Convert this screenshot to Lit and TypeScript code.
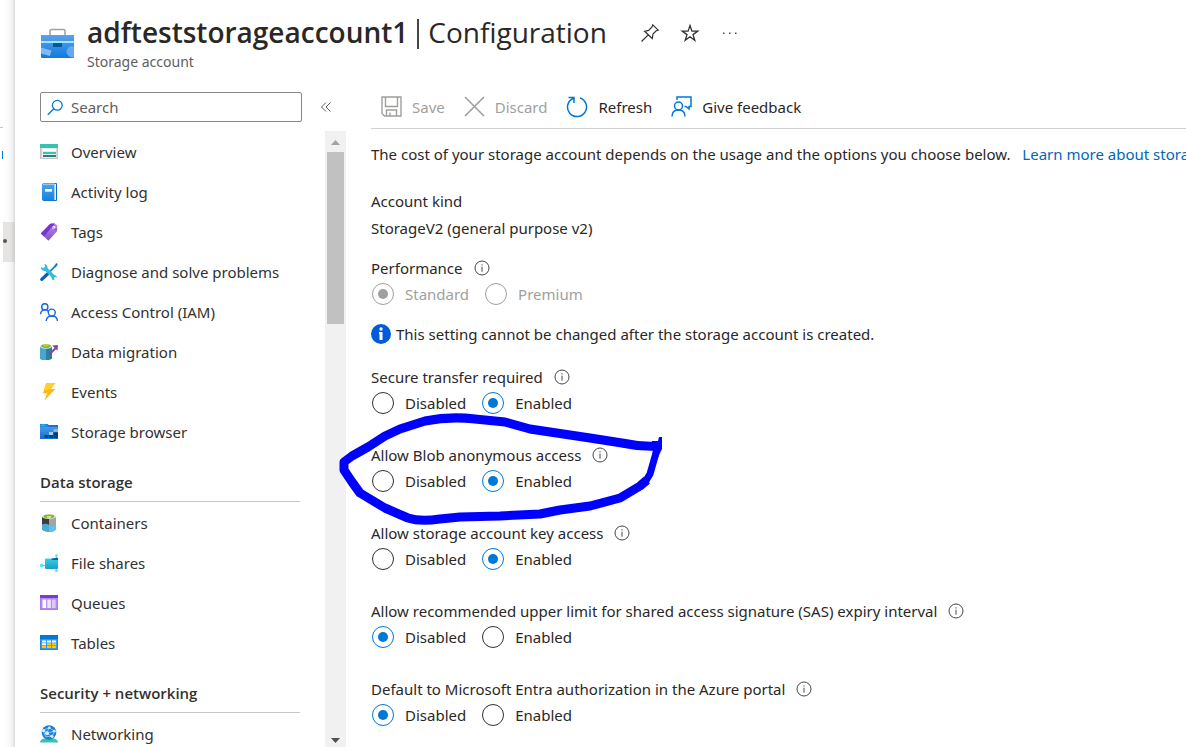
import { LitElement, html, css, svg, nothing } from "lit";
import { customElement, state } from "lit/decorators.js";

type Icon = ReturnType<typeof svg>;

const icons: Record<string, Icon> = {
  overview: svg`<rect x="0" y="1" width="18" height="15" rx=".6" fill="#c4c4c4"/><rect x="1.5" y="5" width="15" height="10" fill="#ececec"/><rect x="0" y="1" width="18" height="4" fill="#37c2b1"/><rect x="3" y="6" width="13" height="2" fill="#fff"/><rect x="3" y="9" width="13" height="2" fill="#37c2b1"/><rect x="3" y="12" width="13" height="2" fill="#258277"/>`,
  log: svg`<rect x="3" y="0" width="14" height="18" rx="1" fill="#0f6cbd"/><rect x="4" y="1" width="12" height="16" fill="#e6f2fb"/><path d="M2 1.2Q2 .4 3 .4h12l-.6 1.2V17.6H3q-1 0-1-1z" fill="url(#gBook)"/><rect x="3" y=".6" width="12" height="1.2" fill="#a9d3f5"/><rect x="5" y="6" width="7" height="2.6" fill="#fff"/>`,
  tags: svg`<path d="M.8 10.600 9.400 1.400Q10.300.4 11.600.4h3l2.600 1.800v5.200q0 .8-.6 1.400L8.400 17.800z" fill="url(#gTag)"/><path d="M.8 10.600 9.400 1.400Q10.300.4 11.600.4h3.400L4 13.600z" fill="#7a35d8"/><circle cx="13.800" cy="4.600" r="1.600" fill="#fff"/><path d="M12.800 4.200q2 3 3.800 2" fill="none" stroke="#6a2fc0" stroke-width=".8"/>`,
  tools: svg`<path d="M3 15.500 15.500 2.800" stroke="#198ab3" stroke-width="1.800"/><path d="M1.800 16.400 7.500 11" stroke="#0f5fa8" stroke-width="3.200" stroke-linecap="round"/><path d="M15 4l2-3.400" stroke="#157ba5" stroke-width="2"/><path d="M4.500 4.500 14 14.300" stroke="#32bedd" stroke-width="3.600"/><path d="M4.300.8a4 4 0 0 1 2.900 5.500L5.500 8A4 4 0 0 1 .8 3.700l2.500 1.600 1.800-1.500z" fill="#32bedd"/><path d="M12.700 12.200a3.600 3.600 0 0 1 4.600 2.500l-2.200-.6-1.200 1.200.6 2.200a3.600 3.600 0 0 1-3-4z" fill="#32bedd"/>`,
  iam: svg`<g fill="none" stroke="#1a66dc" stroke-width="1.400"><circle cx="4.800" cy="3.900" r="3.100"/><path d="M.5 11.200Q1 6.800 5 6.900q2 0 3.400 1.700"/><circle cx="11.800" cy="9.600" r="3.500"/><path d="M6.200 18q.3-5 5.600-5t5.700 5"/></g>`,
  migration: svg`<path d="M0 3.200h12V15q0 2-6 2t-6-2z" fill="#2e7fa5"/><path d="M0 3.200h6V17q-6 0-6-2z" fill="#45a8cf"/><ellipse cx="6" cy="3.200" rx="6" ry="2.500" fill="#e8e8e8"/><ellipse cx="6" cy="3.100" rx="4.900" ry="1.800" fill="#86b81b"/><ellipse cx="6" cy="2.600" rx="3" ry=".8" fill="#b4d63a"/><path d="m9.500 11.300 6-6" stroke="#804998" stroke-width="2"/><path d="M12.200 2.600 18 2l-.6 5.800z" fill="#804998"/>`,
  events: svg`<path d="M6.200 0h9.300L10.700 6h4.600L4.300 17.800l2.800-7.600H2.900z" fill="#fdb813"/><path d="M6.200 0h9.300L9 7H3.800z" fill="#ffd02b"/>`,
  browser: svg`<path d="M0 1h7.500l1.300 1H18v14H0z" fill="#1a74cc"/><path d="M0 4h18v12H0z" fill="url(#gFold)"/><path d="M0 1h7.500l1 2-1 1H0z" fill="#1490df"/><path d="M1 1.700h4v1H1z" fill="#4cc2f2"/><g fill="#103f76"><path d="M4.500 12h4v3h-4zM9 12h4v3H9zM13.500 12H18v3h-4.500z"/></g><path d="M9 9h4v3H9z" fill="#9cd0fb"/><path d="M13.500 6H18v3h-4.500z" fill="#74b8f5"/><path d="M13.500 9.400H18V12h-4.500z" fill="#0c3568"/>`,
  containers: svg`<path d="M2 2.500h7v15q-7-.5-7-3z" fill="#3c3c3c"/><path d="M9 2.500h7v12q0 2.500-7 3z" fill="#a3a3a3"/><path d="M2 10.500q3.500-1.500 7 .3t7-.4v4.600q-1.500 2.900-7 2.900t-7-2.900z" fill="#4ba9d3"/><path d="M9 10.800q3.500 1.600 7-.4v4.600q-1.500 2.900-7 2.900z" fill="#5fc0ea"/><ellipse cx="9" cy="2.500" rx="7" ry="2.400" fill="#e6e6e6"/><ellipse cx="9" cy="2.400" rx="5.400" ry="1.800" fill="#86b81b"/><ellipse cx="9" cy="3" rx="2.600" ry=".8" fill="#f0f7d8"/>`,
  shares: svg`<path d="M1.500 11.500H6M16.400 2v15" stroke="#3fc9ea" stroke-width="1"/><path d="M11 4.600 18 3.800V14h-4z" fill="#0f5fa8"/><path d="M5 5.800q0-1.200 1.200-1.200h4.300l1 1.500H18V14q0 1-1 1H6q-1 0-1-1z" fill="url(#gShare)"/><circle cx="1.800" cy="11.500" r="1.900" fill="#50e6ff"/><circle cx="16.400" cy="1.600" r="1.400" fill="#50e6ff"/><circle cx="16.400" cy="16.500" r="1.500" fill="#50e6ff"/>`,
  queues: svg`<rect x=".5" y="1.500" width="17" height="14" fill="#b389f5" stroke="#a67af4"/><rect x="0" y="1" width="18" height="3" fill="#773adc"/><rect x="2.500" y="5.500" width="3.600" height="8.500" fill="#fff"/><rect x="7.300" y="5.500" width="3.600" height="8.500" fill="#efe3fd"/><rect x="12" y="5.500" width="3.600" height="8.500" fill="#dcc6fb"/>`,
  tables: svg`<rect x=".5" y="1.500" width="17" height="14" fill="#3f98e8" stroke="#2a86dc"/><rect x="0" y="1" width="18" height="4.200" fill="#0078d4"/><g fill="#fff"><path d="M2 6.400h4v2H2zM7 6.400h4v2H7zM12 6.400h4v2h-4zM2 9.200h4v2H2z"/></g><g fill="#ffca00"><path d="M7 9.200h4v2H7zM12 9.200h4v2h-4zM2 12h4v2H2zM7 12h4v2H7zM12 12h4v2h-4z"/></g>`,
  network: svg`<path d="M0 17.500q0-3 4-4h10q4 1 4 4z" fill="#37c2b1"/><circle cx="9" cy="7.500" r="7.300" fill="#1b7fd6"/><path d="m3 5.500 6-2.800 5.500 3.500-2.500 5-6.200.6zM9 2.700 7 8l5 3.500M3 5.500 7 8l7.500-1.800" fill="none" stroke="#8ecdf8" stroke-width=".9"/><g fill="#d3ecfd"><circle cx="3.600" cy="5.600" r="1.700"/><circle cx="9.300" cy="2.800" r="1.300"/><circle cx="14.300" cy="6.200" r="1.400"/><circle cx="7" cy="8.200" r="2"/><circle cx="12" cy="11.300" r="1.600"/></g>`,
};

const gradients = svg`<defs>
  <linearGradient id="gBook" x2="0" y2="1"><stop offset="0" stop-color="#4ba5ee"/><stop offset="1" stop-color="#1583dc"/></linearGradient>
  <linearGradient id="gTag" x2="0" y2="1"><stop offset="0" stop-color="#b98af0"/><stop offset="1" stop-color="#7d55bd"/></linearGradient>
  <linearGradient id="gFold" x2="0" y2="1"><stop offset="0" stop-color="#4a98ec"/><stop offset="1" stop-color="#0f6fcb"/></linearGradient>
  <linearGradient id="gShare" x2="0" y2="1"><stop offset="0" stop-color="#35cdec"/><stop offset="1" stop-color="#1c9dc4"/></linearGradient>
</defs>`;

const menu = [
  {
    title: "",
    items: [
      ["overview", "Overview"],
      ["log", "Activity log"],
      ["tags", "Tags"],
      ["tools", "Diagnose and solve problems"],
      ["iam", "Access Control (IAM)"],
      ["migration", "Data migration"],
      ["events", "Events"],
      ["browser", "Storage browser"],
    ],
  },
  {
    title: "Data storage",
    items: [
      ["containers", "Containers"],
      ["shares", "File shares"],
      ["queues", "Queues"],
      ["tables", "Tables"],
    ],
  },
  { title: "Security + networking", items: [["network", "Networking"]] },
];

const settings = [
  { id: "secure", label: "Secure transfer required", value: "Enabled" },
  { id: "blob", label: "Allow Blob anonymous access", value: "Enabled", marked: true },
  { id: "key", label: "Allow storage account key access", value: "Enabled" },
  {
    id: "sas",
    label: "Allow recommended upper limit for shared access signature (SAS) expiry interval",
    value: "Disabled",
  },
  { id: "entra", label: "Default to Microsoft Entra authorization in the Azure portal", value: "Disabled" },
];

@customElement("app-root")
export class AppRoot extends LitElement {
  @state() private values: Record<string, string> = Object.fromEntries(
    settings.map((s) => [s.id, s.value]),
  );

  static styles = css`
    :host {
      display: flex;
      height: 100vh;
      overflow: hidden;
      background: #fff;
      color: #292827;
      font: 15px/20px "Segoe UI", "Noto Sans", "Open Sans", sans-serif;
    }
    * {
      box-sizing: border-box;
    }
    button {
      border: 0;
      padding: 0;
      background: none;
      color: inherit;
      font: inherit;
      display: flex;
      align-items: center;
    }
    a {
      color: inherit;
      text-decoration: none;
    }
    svg {
      display: block;
      flex: none;
    }
    .behind {
      flex: none;
      width: 15px;
      display: flex;
    }
    .behind-page {
      width: 3px;
      padding-top: 127px;
    }
    .behind-line {
      height: 1px;
      background: #c8c6c4;
    }
    .behind-link {
      width: 1px;
      height: 8px;
      margin: 23px 0 0 2px;
      background: #0078d4;
    }
    .shadow {
      flex: 1;
      padding-top: 222px;
      background: linear-gradient(90deg, #fff 0, #fafafa 50%, #f0f0f0 80%, #dadada 100%);
    }
    .grip {
      height: 40px;
      padding-top: 17px;
      background: linear-gradient(90deg, #e6e4e2 60%, #cfcdcb);
    }
    .dot {
      width: 4px;
      height: 4px;
      border-radius: 2px;
      background: #555;
    }
    .blade {
      flex: 1;
      min-width: 0;
      display: flex;
      flex-direction: column;
      padding-left: 25px;
    }
    header {
      flex: none;
      display: flex;
      height: 92px;
      padding-top: 12px;
      gap: 12px;
    }
    .logo {
      margin-top: 16px;
    }
    .title-row {
      display: flex;
      align-items: center;
      height: 40px;
    }
    h1 {
      display: flex;
      gap: 9px;
      margin: 0;
      font: 400 28px/40px "Segoe UI", "Open Sans", "Noto Sans", sans-serif;
      white-space: nowrap;
    }
    h1 b {
      font-weight: 600;
    }
    h1 i {
      width: 2px;
      height: 30px;
      margin-top: 7px;
      background: #484644;
    }
    .subtitle {
      font-size: 14px;
      color: #605e5c;
    }
    .title-tools {
      display: flex;
      gap: 20px;
      padding: 2px 0 0 33px;
    }
    .body {
      flex: 1;
      min-height: 0;
      display: flex;
    }
    .side {
      flex: none;
      width: 306px;
      display: flex;
      flex-direction: column;
    }
    .search-row {
      flex: none;
      display: flex;
      align-items: center;
      gap: 18px;
      height: 30px;
    }
    .search {
      display: flex;
      align-items: center;
      width: 262px;
      height: 30px;
      border: 1px solid #8a8886;
      border-radius: 2px;
      padding-left: 6px;
      gap: 7px;
    }
    .search input {
      flex: 1;
      min-width: 0;
      border: 0;
      outline: 0;
      padding: 0;
      font: inherit;
      background: none;
    }
    .search input::placeholder {
      color: #605e5c;
      opacity: 1;
    }
    .scroll {
      flex: 1;
      min-height: 0;
      display: flex;
      margin-top: 9px;
    }
    nav {
      flex: 1;
      overflow: hidden;
      padding-top: 1px;
      color: #323130;
    }
    ul {
      margin: 0;
      padding: 0;
      list-style: none;
    }
    .item {
      display: flex;
      align-items: center;
      height: 40px;
      gap: 13px;
    }
    nav h2 {
      width: 260px;
      height: 50px;
      margin: 0 0 1px;
      padding: 20px 0 0;
      border-bottom: 1px solid #c8c6c4;
      font: 600 15px/20px "Segoe UI", "Open Sans", "Noto Sans", sans-serif;
    }
    .bar {
      flex: none;
      width: 21px;
      display: flex;
      flex-direction: column;
      align-items: center;
      background: #f1f1f1;
    }
    .bar svg {
      height: 21px;
    }
    .thumb {
      width: 17px;
      height: 172px;
      margin-bottom: auto;
      background: #c1c1c1;
    }
    main {
      flex: 1;
      min-width: 0;
      padding-left: 25px;
      white-space: nowrap;
    }
    .toolbar {
      display: flex;
      align-items: center;
      height: 37px;
      padding: 0 0 7px 10px;
      gap: 19px;
      border-bottom: 1px solid #d2d0ce;
    }
    .toolbar button {
      gap: 10px;
    }
    .toolbar button:disabled {
      color: #a19f9d;
    }
    .intro {
      margin: 15px 0 27px;
      overflow: hidden;
    }
    .intro a {
      color: #0067b8;
      margin-left: 8px;
    }
    .text {
      margin: 0;
    }
    .text.value {
      margin: 7px 0 20px;
    }
    .label {
      display: flex;
      align-items: center;
      gap: 11px;
      height: 20px;
    }
    .choices {
      display: flex;
      gap: 16px;
      height: 22px;
      margin: 5px 0 0 1px;
    }
    .choice {
      display: flex;
      align-items: center;
      gap: 11px;
    }
    .choice input {
      appearance: none;
      display: grid;
      place-items: center;
      width: 22px;
      height: 22px;
      margin: 0;
      border: 1px solid #323130;
      border-radius: 50%;
    }
    .choice input:checked {
      border-color: #0078d4;
    }
    .choice input:checked::before {
      content: "";
      width: 10px;
      height: 10px;
      border-radius: 50%;
      background: #0078d4;
    }
    .locked {
      color: #a19f9d;
    }
    .locked input,
    .locked input:checked {
      border-color: #a19f9d;
    }
    .locked input:checked::before {
      background: #a19f9d;
    }
    .note {
      display: flex;
      align-items: center;
      gap: 5px;
      margin: 19px 0 23px;
    }
    .setting {
      position: relative;
      height: 78px;
    }
    .mark {
      position: absolute;
      left: -43px;
      top: -35px;
      pointer-events: none;
    }
  `;

  private icon(name: string) {
    return html`<svg width="18" height="18" viewBox="0 0 18 18" aria-hidden="true">${gradients}${icons[name]}</svg>`;
  }

  private info(label: string) {
    return html`<button aria-label="About ${label}">
      <svg width="16" height="16" viewBox="0 0 16 16" fill="none" stroke="#484644">
        <circle cx="8" cy="8" r="7" /><path d="M8 6.700v5M8 4.300v1.200" />
      </svg>
    </button>`;
  }

  private radios(id: string, options: string[], value: string, locked = false) {
    return html`<div class="choices ${locked ? "locked" : ""}" role="radiogroup" aria-labelledby="${id}-label">
      ${options.map(
        (o) => html`<label class="choice"
          ><input
            type="radio"
            name=${id}
            .checked=${value === o}
            ?disabled=${locked}
            @change=${() => (this.values = { ...this.values, [id]: o })}
          />${o}</label
        >`,
      )}
    </div>`;
  }

  render() {
    return html`
      <div class="behind" aria-hidden="true">
        <div class="behind-page">
          <div class="behind-line"></div>
          <div class="behind-link"></div>
        </div>
        <div class="shadow"><div class="grip"><div class="dot"></div></div></div>
      </div>
      <div class="blade">
        <header>
          <svg class="logo" width="35" height="31" viewBox="0 0 35 31" aria-hidden="true">
            <defs>
              <linearGradient id="gCase" x2="0" y2="1">
                <stop offset="0" stop-color="#5ea0ef" /><stop offset="1" stop-color="#0f7bdc" />
              </linearGradient>
            </defs>
            <path d="M10 7V3q0-1.500 1.500-1.500h12Q25 1.500 25 3v4" fill="none" stroke="#a3a3a3" stroke-width="1.600" />
            <path d="M1 7h33v22q0 1-1 1H2q-1 0-1-1z" fill="url(#gCase)" />
            <path d="M1 13h33v2H1z" fill="#9cebff" />
            <path d="M13 15h9v4h-9z" fill="#005a9e" />
            <path d="m1 19.500 10.500 3-1.700 5.500L1 25.500z" fill="#83b9f9" />
            <path d="M34 18.500a5.600 5.600 0 1 0 0 10.500z" fill="#66a8f0" />
          </svg>
          <div>
            <div class="title-row">
              <h1><b>adfteststorageaccount1</b><i></i><span>Configuration</span></h1>
              <div class="title-tools">
                <button aria-label="Pin">
                  <svg width="20" height="20" viewBox="0 0 20 20" fill="none" stroke="#323130" stroke-width="1.200">
                    <path d="M12.800 1.800 18.200 7.200 16.200 7.800 13 11 12.200 15.500 4.600 8.300 8.600 7.400 12 4zM8.200 11.800 1.500 18.500" />
                  </svg>
                </button>
                <button aria-label="Favorite">
                  <svg width="20" height="20" viewBox="0 0 20 20" fill="none" stroke="#323130" stroke-width="1.300">
                    <path d="m10 2.500 1.900 5.600h5.900L13 11.600l1.800 5.700-4.800-3.500-4.800 3.500L7 11.600 2.200 8.100h5.900z" />
                  </svg>
                </button>
                <button aria-label="More">
                  <svg width="20" height="20" viewBox="0 0 20 20" fill="#484644">
                    <path d="M3 9.500h1.500V11H3zM9 9.500h1.500V11H9zM15 9.500h1.500V11H15z" />
                  </svg>
                </button>
              </div>
            </div>
            <div class="subtitle">Storage account</div>
          </div>
        </header>
        <div class="body">
          <div class="side">
            <div class="search-row">
              <label class="search">
                <svg width="17" height="17" viewBox="0 0 17 17" fill="none" stroke="#0078d4" stroke-width="1.300" aria-hidden="true">
                  <circle cx="10.300" cy="6.300" r="4.900" /><path d="M6.800 9.800.8 15.800" />
                </svg>
                <input type="text" placeholder="Search" aria-label="Search" />
              </label>
              <button aria-label="Collapse menu">
                <svg width="12" height="12" viewBox="0 0 12 12" fill="none" stroke="#605e5c">
                  <path d="M6 1.500 1.500 6 6 10.500M10.500 1.500 6 6l4.500 4.500" />
                </svg>
              </button>
            </div>
            <div class="scroll">
              <nav>
                ${menu.map(
                  (g) => html`${g.title ? html`<h2>${g.title}</h2>` : nothing}
                    <ul>
                      ${g.items.map(
                        ([i, t]) => html`<li><a class="item" href="#${i}">${this.icon(i)}<span>${t}</span></a></li>`,
                      )}
                    </ul>`,
                )}
              </nav>
              <div class="bar" aria-hidden="true">
                <svg width="11" height="21" viewBox="0 0 11 21"><path d="M1 14 5.500 9l4.500 5z" fill="#a3a3a3" /></svg>
                <div class="thumb"></div>
                <svg width="11" height="21" viewBox="0 0 11 21"><path d="m1 12 4.500 5 4.500-5z" fill="#505050" /></svg>
              </div>
            </div>
          </div>
          <main>
            <div class="toolbar">
              <button disabled>
                <svg width="21" height="21" viewBox="0 0 21 21" fill="none" stroke="#a19f9d" stroke-width="1.400">
                  <path d="M1 1h19v19H3.500L1 17.500zM4.500 1v9.500h12V1M5.500 20v-6h10v6M9 20v-3.500" />
                </svg>
                Save
              </button>
              <button disabled>
                <svg width="21" height="21" viewBox="0 0 21 21" fill="none" stroke="#a19f9d" stroke-width="1.600">
                  <path d="m1 1 19 19M20 1 1 20" />
                </svg>
                Discard
              </button>
              <button>
                <svg width="22" height="22" viewBox="0 0 22 22" fill="none" stroke="#0078d4" stroke-width="1.500">
                  <path d="M14 2A9.500 9.500 0 1 1 7.500 2.200M2.500 1.500H8V7" />
                </svg>
                Refresh
              </button>
              <button>
                <svg width="21" height="21" viewBox="0 0 21 21" fill="none" stroke="#0078d4" stroke-width="1.500">
                  <path d="M6 4V1h14v9.500h-2V13l-3-2.500h-1.500M1 20.500q0-6.500 6.500-6.500t6.500 6.500" />
                  <circle cx="7.500" cy="10" r="4" />
                </svg>
                Give feedback
              </button>
            </div>
            <p class="intro">
              The cost of your storage account depends on the usage and the options you choose below.
              <a href="#learn">Learn more about storage accounts</a>
            </p>
            <p class="text">Account kind</p>
            <p class="text value">StorageV2 (general purpose v2)</p>
            <div class="label"><span id="performance-label">Performance</span>${this.info("Performance")}</div>
            ${this.radios("performance", ["Standard", "Premium"], "Standard", true)}
            <p class="note">
              <svg width="20" height="20" viewBox="0 0 20 20" aria-hidden="true">
                <circle cx="10" cy="10" r="10" fill="#015cda" />
                <circle cx="10" cy="5" r="1.700" fill="#fff" />
                <path d="M8 8h3.500v8h-3V9.800H8z" fill="#fff" />
              </svg>
              This setting cannot be changed after the storage account is created.
            </p>
            ${settings.map(
              (s) => html`<div class="setting">
                <div class="label"><span id="${s.id}-label">${s.label}</span>${this.info(s.label)}</div>
                ${this.radios(s.id, ["Disabled", "Enabled"], this.values[s.id])}
                ${s.marked
                  ? html`<svg class="mark" width="340" height="120" viewBox="328 410 340 120" fill="none" stroke="#00f" stroke-linejoin="round" aria-hidden="true">
                      <path stroke-width="9" d="M658 446 Q640 447 622 443 L590 438 530 429 505 422 475 419 Q450 416 425 421 L400 429 385 436 368 447 352 456 344 462 344 470 352 482 360 493 385 508 408 518 Q420 522 440 519 L460 517 500 516 540 514 560 510 590 506 620 498 640 486 647 480" />
                      <path stroke-width="7" d="m644 484 6-10 4-14 4-14" />
                      <path fill="#00f" stroke="none" d="M652 441h6l1-4h3v12l-4 8-5-2z" />
                    </svg>`
                  : nothing}
              </div>`,
            )}
          </main>
        </div>
      </div>
    `;
  }
}
